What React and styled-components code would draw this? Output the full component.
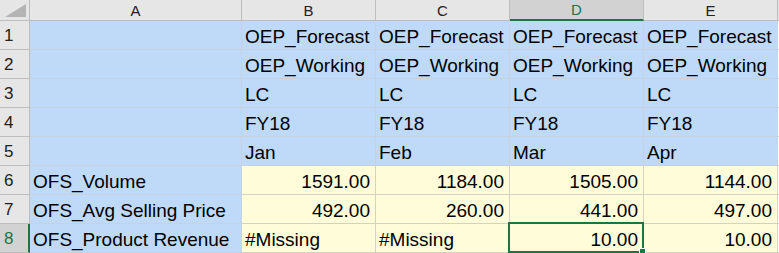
import styled, { createGlobalStyle, css } from "styled-components";

const GlobalStyle = createGlobalStyle`
  html, body {
    margin: 0;
    padding: 0;
    background: #ffffff;
  }
  body {
    font-family: "Liberation Sans", Arial, sans-serif;
    overflow: hidden;
  }
`;

const GREEN = "#217346";

const Sheet = styled.div`
  position: relative;
  display: grid;
  grid-template-columns: 30px 212px 134px 134px 134px 134px 1fr;
  grid-template-rows: 21px repeat(8, 29px);
  width: 779px;
  height: 253px;
  overflow: hidden;
  background: #ffffff;
`;

const Corner = styled.div`
  position: relative;
  background: #e6e6e6;
  border-right: 1px solid #bdbdbd;
  border-bottom: 1px solid #bdbdbd;

  &::after {
    content: "";
    position: absolute;
    left: 5px;
    top: 4px;
    width: 21px;
    height: 13px;
    background: #b4b4b4;
    clip-path: polygon(100% 0, 100% 100%, 0 100%);
  }
`;

const ColHead = styled.div`
  display: flex;
  align-items: center;
  justify-content: center;
  background: #e6e6e6;
  border-right: 1px solid #bdbdbd;
  border-bottom: 1px solid #bdbdbd;
  color: #222222;
  font-size: 15px;
  line-height: 1;
  ${(p) =>
    p.$active &&
    css`
      background: #d2d2d2;
      color: ${GREEN};
      border-bottom: 2px solid ${GREEN};
    `}
`;

const RowHead = styled.div`
  display: flex;
  align-items: flex-end;
  padding: 0 0 5px 4px;
  background: #e6e6e6;
  border-right: 1px solid #bdbdbd;
  border-bottom: 1px solid #bdbdbd;
  color: #222222;
  font-size: 17px;
  line-height: 1;
  ${(p) =>
    p.$active &&
    css`
      background: #d2d2d2;
      color: ${GREEN};
      border-right: 2px solid ${GREEN};
    `}
`;

const Cell = styled.div`
  display: flex;
  align-items: flex-end;
  justify-content: ${(p) => (p.$num ? "flex-end" : "flex-start")};
  padding: 0 ${(p) => (p.$num ? "5px" : "2px")} 3px 3px;
  background: ${(p) => (p.$tone === "yellow" ? "#fffcd9" : p.$tone === "blue" ? "#bfdaf9" : "#ffffff")};
  border-right: 1px solid ${(p) => (p.$tone === "blue" ? "#c8d2de" : "#d2d2c4")};
  border-bottom: 1px solid ${(p) => (p.$tone === "blue" ? "#c8d2de" : "#d2d2c4")};
  color: #000000;
  font-size: 19px;
  line-height: 19px;
  white-space: nowrap;
  overflow: hidden;
`;

const Selection = styled.div`
  position: absolute;
  left: 508px;
  top: 222px;
  width: 136px;
  height: 31px;
  box-sizing: border-box;
  border: 2px solid ${GREEN};
  pointer-events: none;

  &::after {
    content: "";
    position: absolute;
    right: -4px;
    bottom: -4px;
    width: 5px;
    height: 5px;
    background: ${GREEN};
    border: 1px solid #ffffff;
  }
`;

const cols = ["A", "B", "C", "D", "E"];
const months = ["Jan", "Feb", "Mar", "Apr"];

const headerRows = [
  { n: 1, vals: () => "OEP_Forecast" },
  { n: 2, vals: () => "OEP_Working" },
  { n: 3, vals: () => "LC" },
  { n: 4, vals: () => "FY18" },
  { n: 5, vals: (i) => months[i] },
];

const dataRows = [
  { n: 6, label: "OFS_Volume", vals: ["1591.00", "1184.00", "1505.00", "1144.00"] },
  { n: 7, label: "OFS_Avg Selling Price", vals: ["492.00", "260.00", "441.00", "497.00"] },
  { n: 8, label: "OFS_Product Revenue", vals: ["#Missing", "#Missing", "10.00", "10.00"] },
];

export default function App() {
  return (
    <>
      <GlobalStyle />
      <Sheet>
        <Corner />
        {cols.map((c) => (
          <ColHead key={c} $active={c === "D"}>
            {c}
          </ColHead>
        ))}
        <ColHead />

        {headerRows.map((r) => (
          <Row key={r.n} n={r.n}>
            <Cell $tone="blue" />
            {months.map((_, i) => (
              <Cell key={i} $tone="blue">
                {r.vals(i)}
              </Cell>
            ))}
          </Row>
        ))}

        {dataRows.map((r) => (
          <Row key={r.n} n={r.n} active={r.n === 8}>
            <Cell $tone="blue">{r.label}</Cell>
            {r.vals.map((v, i) => (
              <Cell key={i} $tone="yellow" $num={!v.startsWith("#")}>
                {v}
              </Cell>
            ))}
          </Row>
        ))}

        <Selection />
      </Sheet>
    </>
  );
}

function Row({ n, active, children }) {
  return (
    <>
      <RowHead $active={active}>{n}</RowHead>
      {children}
      <Cell />
    </>
  );
}
